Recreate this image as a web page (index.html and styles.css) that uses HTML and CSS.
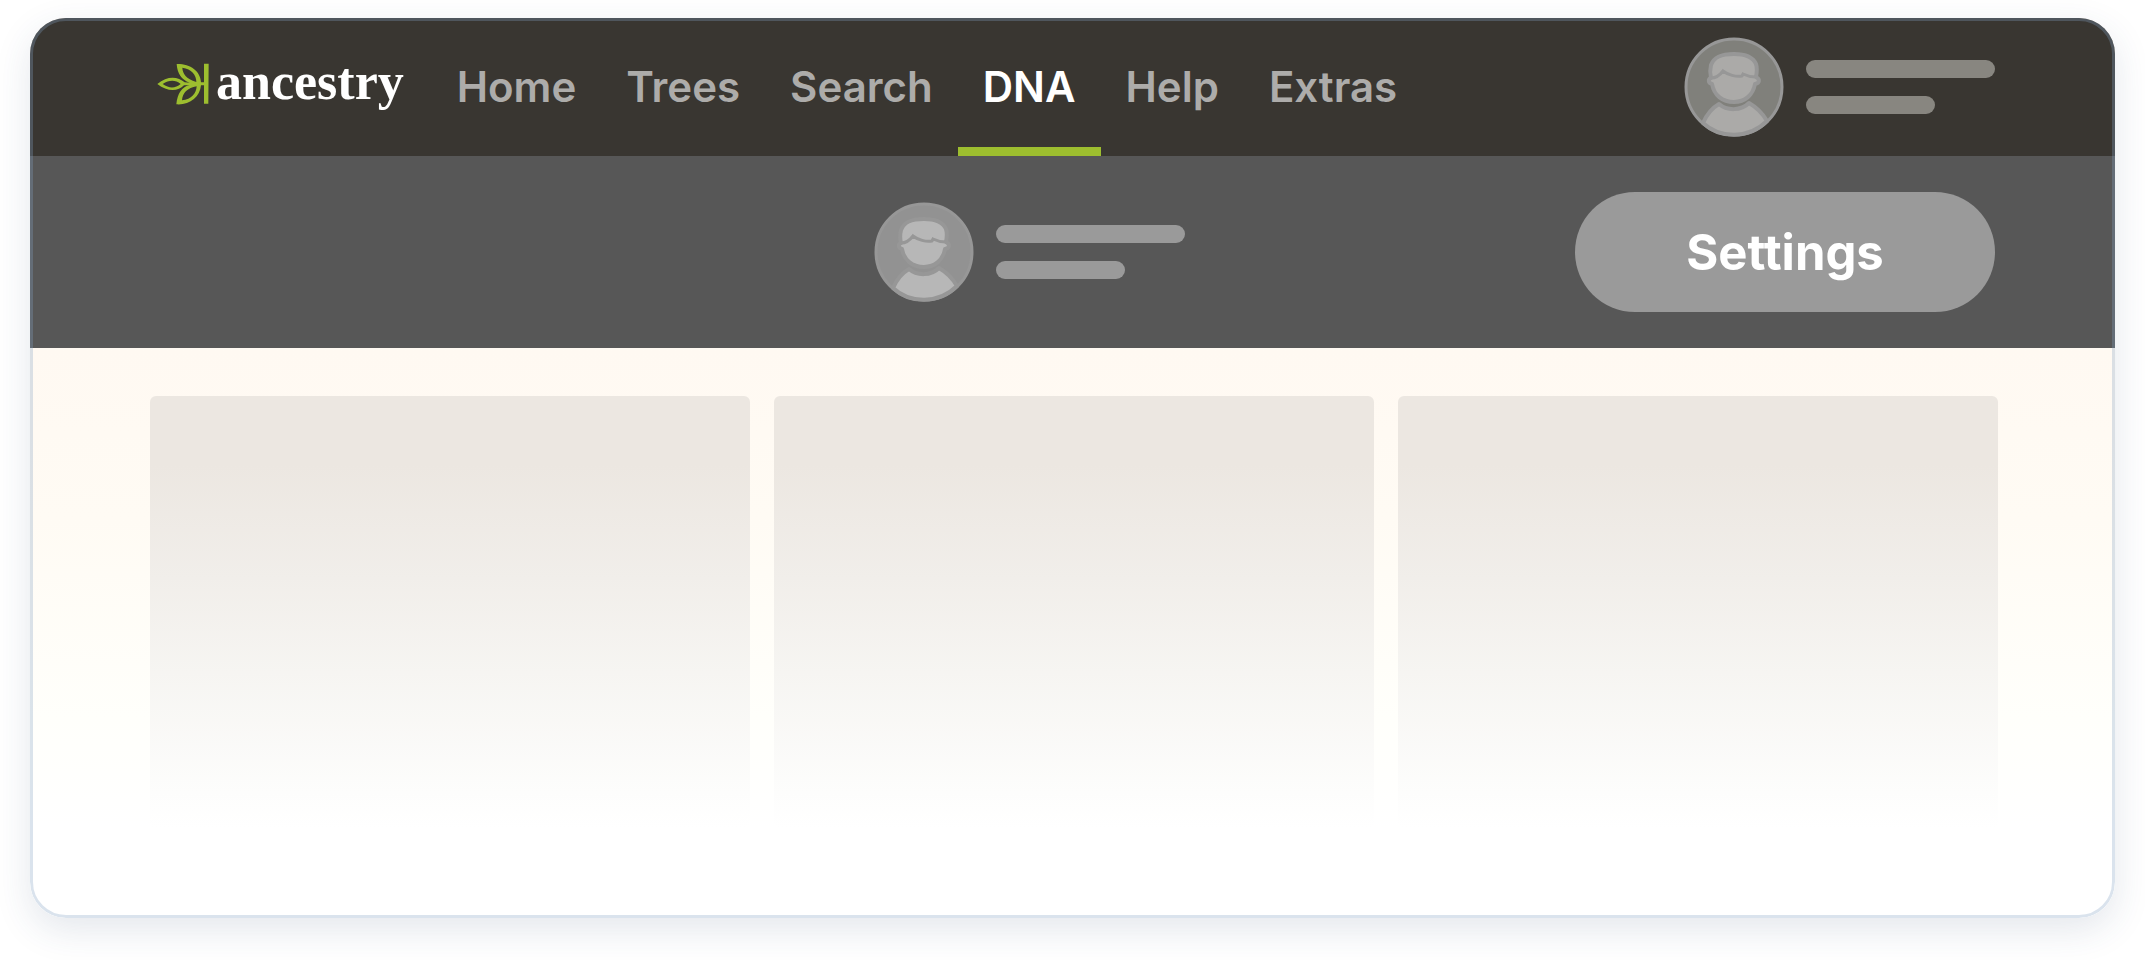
FILE: index.html
```html
<!DOCTYPE html>
<html lang="en">
<head>
    <meta charset="UTF-8">
    <meta name="viewport" content="width=device-width, initial-scale=1.0">
    <title>Ancestry DNA</title>
    <link rel="stylesheet" href="styles.css">
</head>
<body>
    <svg class="defs" aria-hidden="true">
        <symbol id="avatar" viewBox="0 0 100 100">
            <circle class="avatar-bg" cx="50" cy="50" r="48"/>
            <path class="avatar-skin" d="M19 86C23 77 28 71 35 67C43 74 57 74 65 66C72 70 79 77 83 84C65 102 36 102 19 86Z"/>
            <path class="avatar-skin" d="M27 41C24 42 24 46 28 47C30 58 38 65 50 65C61 65 69 58 71 47C76 46 76 42 72 40C73 35 73 30 72 27C69 20 62 17 50 17C37 17 30 20 27 28C26 32 26 37 27 41Z"/>
            <path class="avatar-line" d="M27 41C33 41 36 38 39 34C44 38 52 40 58 39L59 37C63 39 67 40 72 40"/>
            <circle class="avatar-ring" cx="50" cy="50" r="48"/>
        </symbol>
    </svg>
    <div class="window">
        <header class="topbar">
            <a class="logo" href="#">
                <svg class="leaf" viewBox="21 25 156 126" aria-hidden="true">
                    <path d="M162 27H176L175 147H162V92H153C150 128 118 152 79 149C82 116 96 96 119 91L102 92C84 111 52 112 22 88C52 62 84 65 104 83L119 84C94 75 82 57 80 28C120 27 151 48 153 83H162ZM38 88C58 102 76 101 92 88C76 75 58 75 38 88ZM97 39C98 57 108 72 139 82C139 61 125 43 97 39ZM96 137C125 134 139 116 140 95C113 99 97 116 96 137Z"/>
                </svg>
                <span class="logo-text">ancestry</span>
            </a>
            <nav class="menu">
                <a href="#">Home</a>
                <a href="#">Trees</a>
                <a href="#">Search</a>
                <a class="active" href="#">DNA</a>
                <a href="#">Help</a>
                <a href="#">Extras</a>
            </nav>
            <div class="profile">
                <svg class="avatar"><use href="#avatar"/></svg>
                <div class="lines">
                    <div class="line"></div>
                    <div class="line short"></div>
                </div>
            </div>
        </header>
        <div class="subbar">
            <div class="profile">
                <svg class="avatar"><use href="#avatar"/></svg>
                <div class="lines">
                    <div class="line"></div>
                    <div class="line short"></div>
                </div>
            </div>
            <button class="settings" type="button">Settings</button>
        </div>
        <main class="tiles">
            <div class="tile"></div>
            <div class="tile"></div>
            <div class="tile"></div>
        </main>
    </div>
</body>
</html>
```
FILE: styles.css
```css
* {
    box-sizing: border-box;
}
body {
    margin: 0;
    padding: 18px 30px 42px;
    background: #fff;
    font-family: Inter, "Liberation Sans", sans-serif;
}
.defs {
    display: none;
}
.window {
    position: relative;
    border-radius: 36px;
    overflow: hidden;
    background: #fff;
    box-shadow: 0 12px 36px rgba(50, 70, 110, 0.13);
}
/* outline lies over the bars so it tints them */
.window::after {
    content: "";
    position: absolute;
    inset: 0;
    border: 3px solid rgba(132, 162, 195, 0.3);
    border-radius: 36px;
    pointer-events: none;
}

.topbar {
    display: flex;
    height: 138px;
    padding: 0 120px 0 127px;
    background: #393631;
}
.logo {
    display: flex;
    align-items: center;
    gap: 7px;
    padding-bottom: 6px;
    color: #fff;
    text-decoration: none;
}
.leaf {
    width: 52px;
    height: 42px;
    fill: #9dbe2f;
}
.logo-text {
    padding-bottom: 4px;
    font-family: "Liberation Serif", serif;
    font-size: 52px;
    font-weight: 700;
    line-height: 60px;
}
.menu {
    display: flex;
    margin-left: 28px;
}
.menu a {
    display: flex;
    align-items: center;
    padding: 8px 25px 0;
    border-bottom: 9px solid transparent;
    color: #adacaa;
    font-size: 42px;
    font-weight: 600;
    text-decoration: none;
}
.menu a.active {
    color: #fff;
    border-bottom-color: #9dbe2f;
}

.profile {
    display: flex;
    align-items: center;
    gap: 22px;
    --line: #888680;
    --bg: #80807b;
    --skin: #abaaa8;
    --ring: #979797;
}
.topbar .profile {
    margin-left: auto;
}
.avatar {
    width: 100px;
    height: 100px;
}
.avatar-bg {
    fill: var(--bg);
}
.avatar-skin {
    fill: var(--skin);
    stroke: var(--ring);
    stroke-width: 4;
    stroke-linejoin: round;
}
.avatar-line,
.avatar-ring {
    fill: none;
    stroke: var(--ring);
    stroke-width: 3;
}
.lines {
    display: flex;
    flex-direction: column;
    gap: 18px;
    width: 189px;
}
.line {
    height: 18px;
    border-radius: 9px;
    background: var(--line);
}
.line.short {
    width: 129px;
}

.subbar {
    display: grid;
    grid-template-columns: 1fr auto 1fr;
    align-items: center;
    height: 192px;
    padding: 0 120px 0 34px;
    background: #575757;
}
.subbar .profile {
    grid-column: 2;
    --line: #9a9a9a;
    --bg: #929292;
    --skin: #b7b7b7;
    --ring: #979797;
}
.settings {
    justify-self: end;
    width: 420px;
    height: 120px;
    border: 0;
    border-radius: 60px;
    background: #9a9a9a;
    color: #fff;
    font: 700 49px Inter, "Liberation Sans", sans-serif;
    cursor: pointer;
}

.tiles {
    display: grid;
    grid-template-columns: repeat(3, 1fr);
    gap: 24px;
    padding: 48px 117px 90px 120px;
    background: linear-gradient(#fff9f2, #fffbf4 30%, #fffffb 65%, #fff 84%);
}
.tile {
    height: 432px;
    border-radius: 6px;
    background: linear-gradient(#ece7e1 16%, #f1eeea 42%, #f6f5f2 64%, #fdfdfc 92%, #fff);
}
```
